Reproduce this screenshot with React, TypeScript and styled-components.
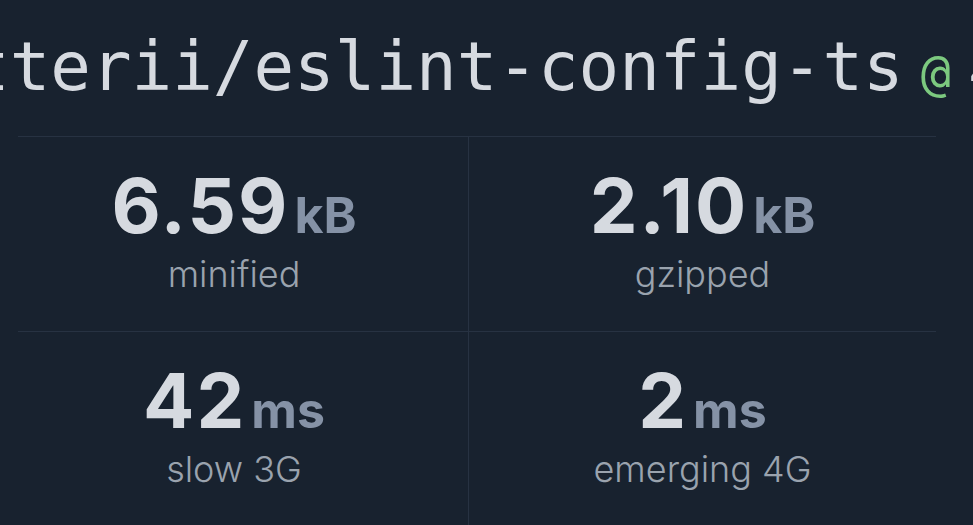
import styled, { createGlobalStyle } from 'styled-components';

const GlobalStyle = createGlobalStyle`
  html, body {
    margin: 0;
    padding: 0;
    background: #18222f;
    overflow: hidden;
  }
`;

type Stat = {
  value: string;
  unit: string;
  label: string;
};

const rows: Stat[][] = [
  [
    { value: '6.59', unit: 'kB', label: 'minified' },
    { value: '2.10', unit: 'kB', label: 'gzipped' },
  ],
  [
    { value: '42', unit: 'ms', label: 'slow 3G' },
    { value: '2', unit: 'ms', label: 'emerging 4G' },
  ],
];

const Page = styled.div`
  width: 973px;
  height: 525px;
  overflow: hidden;
  display: flex;
  flex-direction: column;
  background: #18222f;
`;

const Title = styled.h1`
  margin: 27px 0 0 -31px;
  display: flex;
  align-items: baseline;
  white-space: nowrap;
  font-family: 'DejaVu Sans Mono', 'Liberation Mono', monospace;
  font-weight: 400;
  font-size: 67.5px;
  line-height: 80px;
  color: #d6dae0;
`;

const At = styled.span`
  margin-left: 17px;
  font-size: 50px;
  color: #7cc97f;
`;

const Version = styled.span`
  margin-left: 18px;
  font-size: 50px;
  color: #d6dae0;
`;

const Grid = styled.div`
  margin-top: 23px;
  display: flex;
  flex-direction: column;
`;

const Row = styled.div`
  margin-left: 18px;
  width: 918px;
  display: flex;
  border-top: 1px solid #273242;
`;

const Cell = styled.div<{ $first?: boolean }>`
  box-sizing: border-box;
  height: 194px;
  width: ${(p) => (p.$first ? '450px' : '468px')};
  padding: 30px ${(p) => (p.$first ? '18px' : '0')} 0 0;
  border-left: ${(p) => (p.$first ? 'none' : '1px solid #273242')};
  display: flex;
  flex-direction: column;
  align-items: center;
  font-family: Inter, 'Noto Sans', sans-serif;
`;

const Measure = styled.div`
  display: flex;
  align-items: baseline;
  line-height: 1;
`;

const Value = styled.span`
  font-size: 76px;
  font-weight: 700;
  color: #d6dae0;
  letter-spacing: 2px;
`;

const Unit = styled.span`
  margin-left: 5px;
  font-size: 50px;
  font-weight: 700;
  color: #8592a6;
`;

const Label = styled.div`
  margin-top: 13px;
  font-size: 36px;
  font-weight: 300;
  line-height: 1;
  color: #9aa3ae;
`;

export default function App() {
  return (
    <Page>
      <GlobalStyle />
      <Title>
        tterii/eslint-config-ts
        <At>@</At>
        <Version>4.0.0</Version>
      </Title>
      <Grid>
        {rows.map((row, i) => (
          <Row key={i}>
            {row.map((s, j) => (
              <Cell key={s.label} $first={j === 0}>
                <Measure>
                  <Value>{s.value}</Value>
                  <Unit>{s.unit}</Unit>
                </Measure>
                <Label>{s.label}</Label>
              </Cell>
            ))}
          </Row>
        ))}
      </Grid>
    </Page>
  );
}
